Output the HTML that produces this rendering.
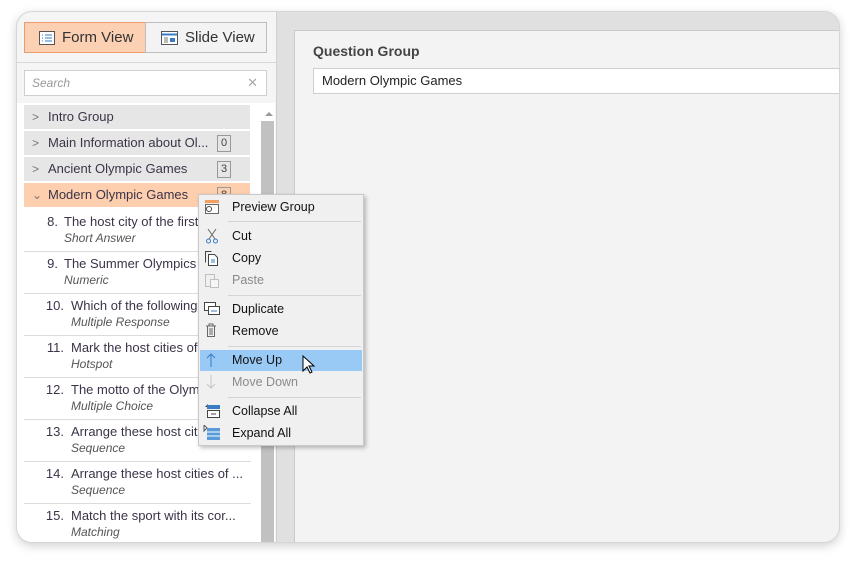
<!DOCTYPE html><html><head><style>
body{margin:0;width:856px;height:563px;background:#fff;font-family:"Segoe UI","Liberation Sans",sans-serif;overflow:hidden;position:relative}
.win{position:absolute;left:16px;top:11px;width:824px;height:532px;border-radius:16px;overflow:hidden;background:#e0e0e0;box-shadow:0 3px 10px rgba(0,0,0,.18);border:1px solid #d6d6d6;box-sizing:border-box}
.a{position:absolute}
.left{left:0;top:0;width:259px;height:532px;background:#f5f5f5;border-right:1px solid #cfcfcf}
.btn{top:10px;height:31px;box-sizing:border-box;font-size:15px;color:#333;line-height:30px}
.row{left:7px;width:226px;height:24px;background:#e6e6e6;font-size:13px;color:#3c3348;line-height:24px}
.row .c{position:absolute;left:8px;top:0;color:#777;font-size:12px}
.row .t{position:absolute;left:24px}
.row .n{position:absolute;left:193px;top:4px;width:12px;height:15px;border:1px solid #999;font-size:11px;line-height:15px;text-align:center;color:#444}
.q{left:7px;width:227px;height:42px;border-bottom:1px solid #dcdcdc;font-size:13px;color:#3c3348;white-space:nowrap;overflow:hidden}
.q .num{position:absolute;top:5px;width:34px;text-align:right}
.q .tx{position:absolute;top:5px}
.q .s{position:absolute;top:22px;font-style:italic;font-size:12px;color:#555}
.menu{left:198px;top:194px;width:166px;height:252px;background:#f0f0f0;border:1px solid #c9c9c9;box-sizing:border-box;box-shadow:2px 2px 4px rgba(0,0,0,.25);font-size:12.5px;color:#111}
.mi{position:absolute;left:33px}
.sep{position:absolute;left:29px;width:133px;height:1px;background:#d4d4d4}
.dis{color:#8a8a8a}
</style></head><body>
<div class="win">
 <div class="a left">
  <div class="a btn" style="left:7px;width:122px;background:#fcd0b2;border:1px solid #ee9c6c"><svg class="a" style="left:14px;top:8px" width="16" height="14"><rect x=".5" y=".5" width="15" height="13" fill="#fff" stroke="#555"/><path d="M3 4h1M3 7h1M3 10h1M6 4h7M6 7h7M6 10h7" stroke="#3a7cc4"/></svg><span class="a" style="left:37px">Form View</span></div>
  <div class="a btn" style="left:128px;width:122px;background:#f3f3f3;border:1px solid #bdbdbd"><svg class="a" style="left:15px;top:8px" width="17" height="14"><rect x=".5" y=".5" width="16" height="13" fill="#fff" stroke="#555"/><path d="M1 3.5h15" stroke="#3a7cc4" stroke-width="2"/><rect x="9" y="7" width="5" height="4" fill="#3a7cc4"/><path d="M3 7h4M3 9h4M3 11h4" stroke="#777"/></svg><span class="a" style="left:39px">Slide View</span></div>
  <div class="a" style="left:0;top:50px;width:259px;height:1px;background:#d8d8d8"></div>
  <div class="a" style="left:7px;top:58px;width:243px;height:26px;background:#fff;border:1px solid #cfcfcf;box-sizing:border-box;font-size:12px;font-style:italic;color:#999;line-height:24px;padding-left:7px">Search<span class="a" style="right:8px;top:0;font-style:normal;color:#aaa;font-size:13px">✕</span></div>
  <div class="a" style="left:0;top:91px;width:258px;height:441px;background:#fff"></div>
  <div class="a" style="left:243px;top:93px;width:15px;height:439px;background:#fff"></div>
  <div class="a" style="left:248px;top:100px;width:0;height:0;border-left:4px solid transparent;border-right:4px solid transparent;border-bottom:4px solid #999"></div>
  <div class="a" style="left:244px;top:109px;width:13px;height:423px;background:#c1c1c1"></div>
  <div class="a row" style="top:93px"><span class="c">&gt;</span><span class="t">Intro Group</span></div>
  <div class="a row" style="top:119px"><span class="c">&gt;</span><span class="t">Main Information about Ol...</span><span class="n">0</span></div>
  <div class="a row" style="top:145px"><span class="c">&gt;</span><span class="t">Ancient Olympic Games</span><span class="n">3</span></div>
  <div class="a row" style="top:171px;background:#fdcfae"><span class="c">⌄</span><span class="t">Modern Olympic Games</span><span class="n">8</span></div>
  <div class="a q" style="top:197px"><span class="num" style="left:0">8.</span><span class="tx" style="left:40px">The host city of the first</span><span class="s" style="left:40px">Short Answer</span></div>
  <div class="a q" style="top:239px"><span class="num" style="left:0">9.</span><span class="tx" style="left:40px">The Summer Olympics c</span><span class="s" style="left:40px">Numeric</span></div>
  <div class="a q" style="top:281px"><span class="num" style="left:6px">10.</span><span class="tx" style="left:47px">Which of the following</span><span class="s" style="left:47px">Multiple Response</span></div>
  <div class="a q" style="top:323px"><span class="num" style="left:6px">11.</span><span class="tx" style="left:47px">Mark the host cities of</span><span class="s" style="left:47px">Hotspot</span></div>
  <div class="a q" style="top:365px"><span class="num" style="left:6px">12.</span><span class="tx" style="left:47px">The motto of the Olym</span><span class="s" style="left:47px">Multiple Choice</span></div>
  <div class="a q" style="top:407px"><span class="num" style="left:6px">13.</span><span class="tx" style="left:47px">Arrange these host citi</span><span class="s" style="left:47px">Sequence</span></div>
  <div class="a q" style="top:449px"><span class="num" style="left:6px">14.</span><span class="tx" style="left:47px">Arrange these host cities of ...</span><span class="s" style="left:47px">Sequence</span></div>
  <div class="a q" style="top:491px;border:0"><span class="num" style="left:6px">15.</span><span class="tx" style="left:47px">Match the sport with its cor...</span><span class="s" style="left:47px">Matching</span></div>
 </div>
 <div class="a" style="left:277px;top:18px;width:560px;height:520px;background:#f3f3f3;border:1px solid #cacaca"></div>
 <div class="a" style="left:296px;top:31px;font-size:14px;font-weight:bold;color:#444">Question Group</div>
 <div class="a" style="left:296px;top:56px;width:540px;height:26px;background:#fff;border:1px solid #cfcfcf;box-sizing:border-box;font-size:13px;color:#222;line-height:24px;padding-left:8px">Modern Olympic Games</div>
</div>
<div class="a menu">
 <svg class="a" style="left:5px;top:4px" width="16" height="16"><rect x="1" y="1" width="14" height="3" fill="#f0a060"/><rect x="1.5" y="5.5" width="13" height="9" fill="#fff" stroke="#666"/><circle cx="5" cy="10" r="2.5" fill="none" stroke="#444"/></svg><span class="mi" style="top:5px">Preview Group</span>
 <div class="sep" style="top:26px"></div>
 <svg class="a" style="left:6px;top:33px" width="14" height="16"><path d="M3 1l7 10M11 1L4 11" stroke="#666" fill="none"/><circle cx="3.5" cy="13" r="2" fill="none" stroke="#3a7cc4"/><circle cx="10.5" cy="13" r="2" fill="none" stroke="#3a7cc4"/></svg><span class="mi" style="top:34px">Cut</span>
 <svg class="a" style="left:5px;top:55px" width="16" height="16"><path d="M1.5 12.5v-11h6" fill="none" stroke="#444"/><path d="M4.5 4.5h6l3 3v8h-9z" fill="#fff" stroke="#444"/><path d="M7 10h4M7 12h4" stroke="#3a7cc4"/></svg><span class="mi" style="top:56px">Copy</span>
 <svg class="a" style="left:5px;top:77px" width="16" height="16" opacity=".4"><rect x="1.5" y="2.5" width="9" height="12" fill="none" stroke="#777"/><rect x="6.5" y="7.5" width="8" height="8" fill="#fff" stroke="#777"/></svg><span class="mi dis" style="top:78px">Paste</span>
 <div class="sep" style="top:100px"></div>
 <svg class="a" style="left:5px;top:107px" width="16" height="14"><rect x=".5" y=".5" width="11" height="8" fill="#fff" stroke="#444"/><rect x="4.5" y="4.5" width="11" height="8" fill="#fff" stroke="#444"/><path d="M7 9h6" stroke="#3a7cc4"/></svg><span class="mi" style="top:107px">Duplicate</span>
 <svg class="a" style="left:6px;top:128px" width="12" height="15"><path d="M1 3h10M4 3V1h4v2M2.5 3.5v10h7v-10M5 5v7M7 5v7" fill="none" stroke="#666"/></svg><span class="mi" style="top:129px">Remove</span>
 <div class="sep" style="top:151px"></div>
 <div class="a" style="left:1px;top:155px;width:162px;height:21px;background:#99caf5"></div>
 <svg class="a" style="left:7px;top:157px" width="10" height="16"><path d="M5 15V2M1 6l4-4 4 4" fill="none" stroke="#3a7cc4"/></svg><span class="mi" style="top:158px">Move Up</span>
 <svg class="a" style="left:103px;top:160px" width="14" height="20"><path d="M1 1v15l4-4 3 6 2-1-3-6h5z" fill="#fff" stroke="#000"/></svg>
 <svg class="a" style="left:7px;top:179px" width="10" height="16" opacity=".4"><path d="M5 1v13M1 10l4 4 4-4" fill="none" stroke="#888"/></svg><span class="mi dis" style="top:180px">Move Down</span>
 <div class="sep" style="top:202px"></div>
 <svg class="a" style="left:4px;top:208px" width="18" height="16"><path d="M2 4l3-3v3z" fill="#333"/><rect x="4" y="2" width="13" height="4" fill="#3a7cc4"/><rect x="4.5" y="7.5" width="12" height="7" fill="#fff" stroke="#444"/><path d="M8 11h5" stroke="#444"/></svg><span class="mi" style="top:209px">Collapse All</span>
 <svg class="a" style="left:4px;top:230px" width="18" height="16"><path d="M1 0v6l3-3z" fill="#fff" stroke="#555"/><rect x="4" y="3" width="13" height="12" fill="#5a9ad8"/><path d="M4 7h13M4 11h13" stroke="#fff"/></svg><span class="mi" style="top:231px">Expand All</span>
</div>
</body></html>
